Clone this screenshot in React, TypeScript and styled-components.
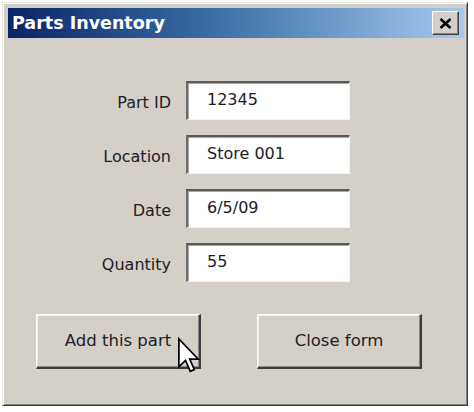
import React from 'react';
import styled, { createGlobalStyle } from 'styled-components';

const GlobalStyle = createGlobalStyle`
  html, body {
    margin: 0;
    padding: 0;
    background: #ffffff;
  }
  body {
    font-family: "DejaVu Sans", Verdana, sans-serif;
  }
`;

const Window = styled.div`
  margin: 2px 0 0 2px;
  width: 466px;
  height: 404px;
  box-sizing: border-box;
  background: #d4d0c8;
  border-style: solid;
  border-width: 1px;
  border-color: #e8e6e0 #404040 #404040 #e8e6e0;
  box-shadow: inset 1px 1px 0 #ffffff, inset -1px -1px 0 #808080;
  padding: 5px 3px 0 5px;
  display: flex;
  flex-direction: column;
`;

const TitleBar = styled.div`
  height: 30px;
  display: flex;
  align-items: center;
  justify-content: space-between;
  padding: 0 5px 0 4px;
  background: linear-gradient(90deg, #0a246a 0%, #3a6ea5 45%, #a6caf0 100%);
`;

const Title = styled.span`
  color: #ffffff;
  font-weight: bold;
  font-size: 17.5px;
`;

const CloseButton = styled.button`
  width: 27px;
  height: 24px;
  padding: 0;
  display: flex;
  align-items: center;
  justify-content: center;
  background: #d4d0c8;
  border-style: solid;
  border-width: 1px;
  border-color: #ffffff #404040 #404040 #ffffff;
  box-shadow: inset -1px -1px 0 #808080;
`;

const Body = styled.div`
  flex: 1;
  display: flex;
  flex-direction: column;
  padding-top: 43px;
`;

const Fields = styled.div`
  display: grid;
  grid-template-columns: 163px 164px;
  grid-auto-rows: 39px;
  column-gap: 15px;
  row-gap: 15px;
`;

const Label = styled.label`
  display: flex;
  align-items: center;
  justify-content: flex-end;
  font-size: 16px;
  color: #1c1c2a;
  padding-top: 3px;
`;

const Field = styled.div`
  box-sizing: border-box;
  background: #ffffff;
  border-style: solid;
  border-width: 2px 1px 1px 2px;
  border-color: #5a5a5a #f4f4f4 #f4f4f4 #6a6a6a;
  box-shadow: inset 1px 1px 0 #a8a8a8;
  display: flex;
  align-items: center;
  padding: 0 0 3px 19px;
  font-size: 16px;
  color: #1c1c2a;
`;

const ButtonRow = styled.div`
  display: flex;
  gap: 56px;
  margin-top: 32px;
  padding-left: 28px;
`;

const Button = styled.button`
  position: relative;
  width: 165px;
  height: 55px;
  box-sizing: border-box;
  background: #d4d0c8;
  border-style: solid;
  border-width: 1px 2px 2px 1px;
  border-color: #ffffff #3c3c3c #3c3c3c #ffffff;
  box-shadow: inset -1px -1px 0 #8a8a8a, inset 1px 1px 0 #eeeeea;
  font-family: "DejaVu Sans", Verdana, sans-serif;
  font-size: 16.5px;
  color: #1c1c2a;
  padding: 0 0 2px 0;
`;

const Cursor = styled.svg`
  position: absolute;
  left: 141px;
  top: 23px;
  width: 21px;
  height: 35px;
  overflow: visible;
`;

const fields = [
  { label: 'Part ID', value: '12345' },
  { label: 'Location', value: 'Store 001' },
  { label: 'Date', value: '6/5/09' },
  { label: 'Quantity', value: '55' },
];

const App: React.FC = () => {
  return (
    <>
      <GlobalStyle />
      <Window>
        <TitleBar>
          <Title>Parts Inventory</Title>
          <CloseButton aria-label="Close">
            <svg width="13" height="11" viewBox="0 0 13 11">
              <path d="M1.5 1 L11.5 10 M11.5 1 L1.5 10" stroke="#000" strokeWidth="2.6" />
            </svg>
          </CloseButton>
        </TitleBar>
        <Body>
          <Fields>
            {fields.map((f) => (
              <React.Fragment key={f.label}>
                <Label>{f.label}</Label>
                <Field>{f.value}</Field>
              </React.Fragment>
            ))}
          </Fields>
          <ButtonRow>
            <Button>
              Add this part
              <Cursor viewBox="0 0 12 20">
                <path
                  d="M0.5 0.5 L0.5 16.5 L4.3 12.8 L7 19 L9.3 18 L6.7 12 L11.5 12 Z"
                  fill="#ffffff"
                  stroke="#000000"
                  strokeWidth="1"
                  strokeLinejoin="miter"
                />
              </Cursor>
            </Button>
            <Button>Close form</Button>
          </ButtonRow>
        </Body>
      </Window>
    </>
  );
};

export default App;
